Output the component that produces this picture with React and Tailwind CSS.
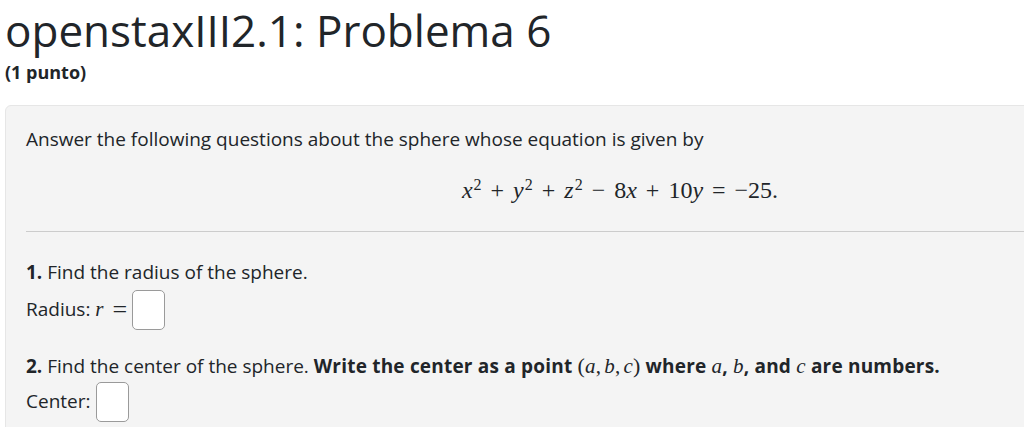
import React from 'react';

const sans = { fontFamily: '"Open Sans", "Noto Sans", sans-serif' };
const serif = { fontFamily: '"Liberation Serif", "DejaVu Serif", serif' };

const M = ({ children }) => (
  <span className="italic text-[21px]" style={serif}>
    {children}
  </span>
);

const Op = ({ children }) => <span className="mx-[9px]">{children}</span>;
const Sup = () => <sup className="text-[16px] ml-[1px]">2</sup>;

const AnswerBox = () => (
  <span className="inline-block align-middle w-[33px] h-[40px] bg-white border border-[#9a9a9a] rounded-[5px]" />
);

export default function App() {
  return (
    <div className="bg-white text-[#212529] w-[1024px] h-[427px] overflow-hidden" style={sans}>
      <div className="pl-[5px]">
        <h1 className="text-[44px] leading-[60px]">openstaxIII2.1: Problema 6</h1>
        <p className="text-[18px] font-bold leading-[25px]">(1 punto)</p>
      </div>

      <div className="ml-[5px] mt-[20px] w-[1210px] bg-[#f4f4f4] border border-[#e6e6e6] rounded-tl-[6px] pl-[20px] pt-[19px] pb-[30px]">
        <p className="text-[19px] leading-[28px]">
          Answer the following questions about the sphere whose equation is given by
        </p>
        <div className="flex justify-center mt-[22px] text-[24px] leading-[30px]" style={serif}>
          <span className="whitespace-nowrap">
            <i>x</i><Sup /><Op>+</Op><i>y</i><Sup /><Op>+</Op><i>z</i><Sup />
            <Op>−</Op>8<i>x</i><Op>+</Op>10<i>y</i><Op>=</Op>−25.
          </span>
        </div>
        <div className="mt-[26px] border-t border-[#cccccc]" />

        <div className="pt-[26px] text-[19px]">
          <p className="leading-[28px]">
            <b>1.</b> Find the radius of the sphere.
          </p>
          <div className="flex items-center mt-[3px] h-[41px]">
            <span>
              Radius: <M>r</M>
            </span>
            <span className="text-[26px] ml-[9px] mr-[5px]" style={serif}>=</span>
            <AnswerBox />
          </div>

          <p className="leading-[28px] mt-[22px]">
            <b>2.</b> Find the center of the sphere.{' '}
            <b className="tracking-[0.2px]">
              Write the center as a point{' '}
              <span className="font-normal">
                <span className="text-[22px]" style={serif}>(</span><M>a</M><span className="text-[21px] mr-[3px]" style={serif}>,</span><M>b</M><span className="text-[21px] mr-[3px]" style={serif}>,</span><M>c</M><span className="text-[22px]" style={serif}>)</span>
              </span>{' '}
              where <span className="font-normal"><M>a</M></span>, <span className="font-normal"><M>b</M></span>, and{' '}
              <span className="font-normal"><M>c</M></span> are numbers.
            </b>
          </p>
          <div className="flex items-center gap-[5px] mt-[1px] h-[41px]">
            <span>Center:</span>
            <AnswerBox />
          </div>
        </div>
      </div>
    </div>
  );
}
